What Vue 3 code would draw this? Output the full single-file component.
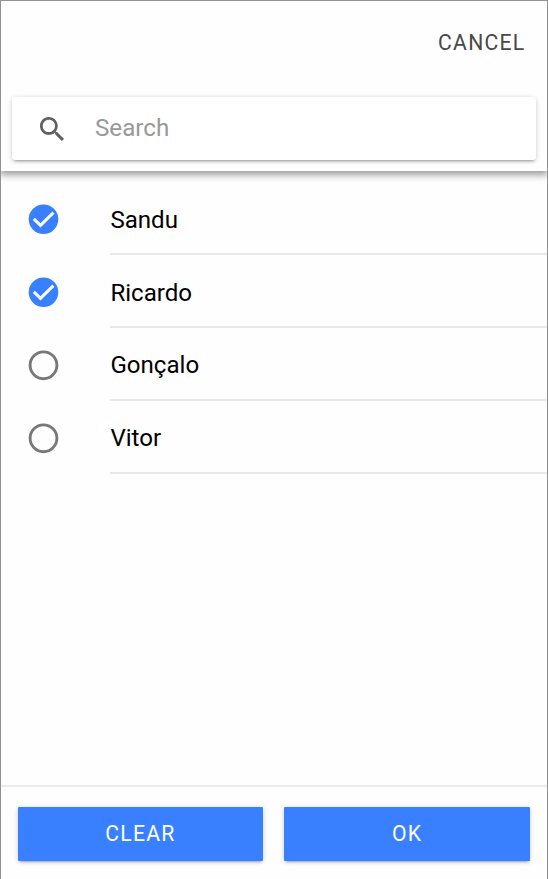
<script setup>
import { ref } from 'vue'

const query = ref('')
const people = ref([
  { name: 'Sandu', checked: true },
  { name: 'Ricardo', checked: true },
  { name: 'Gonçalo', checked: false },
  { name: 'Vitor', checked: false },
])

function clear() {
  people.value.forEach((person) => {
    person.checked = false
  })
}
</script>

<template>
  <div class="modal">
    <header class="header">
      <div class="toolbar">
        <button class="cancel">CANCEL</button>
      </div>
      <label class="search">
        <svg class="search-icon" viewBox="0 0 512 512" aria-hidden="true">
          <path d="M337.5 305.4H320l-6.6-5.5c20.8-25.2 34-57 34-93.3C347.400 127.600 283.900 64 205.100 64 127.500 64 64 127.600 64 206.600s63.500 142.600 142.200 142.600c35 0 67.800-13.100 93-34l6.600 5.500v17.600L415.200 448l32.800-32.900zM206.200 305.400c-54.700 0-98.400-43.900-98.400-98.800s43.700-98.700 98.400-98.700 98.500 43.900 98.500 98.700-43.800 98.800-98.500 98.800z" />
        </svg>
        <input v-model="query" class="search-input" type="text" placeholder="Search" />
      </label>
    </header>

    <main class="list">
      <div
        v-for="person in people"
        :key="person.name"
        class="item"
        @click="person.checked = !person.checked"
      >
        <svg class="check" viewBox="-0.5 -0.3 31 31" aria-hidden="true">
          <template v-if="person.checked">
            <circle cx="15" cy="15" r="14.800" fill="#3880ff" />
            <path d="M5.300 14.600 12 21.100 24.900 8.300" fill="none" stroke="#fff" stroke-width="3" />
          </template>
          <circle v-else cx="15" cy="15" r="13.400" fill="none" stroke="#787878" stroke-width="2.900" />
        </svg>
        <span class="name">{{ person.name }}</span>
      </div>
    </main>

    <footer class="footer">
      <button class="action" @click="clear">CLEAR</button>
      <button class="action">OK</button>
    </footer>
  </div>
</template>

<style>
body {
  background: #fff;
}
</style>

<style scoped>
.modal {
  box-sizing: border-box;
  height: 879px;
  display: flex;
  flex-direction: column;
  border: 1px solid #919191;
  border-bottom: 0;
  background: #fefefe;
  color: #000;
  font-family: Roboto, sans-serif;
}

button {
  border: 0;
  padding: 0;
  font-family: inherit;
  font-size: 21.2px;
  line-height: 26px;
  letter-spacing: 1.25px;
}

.header {
  box-sizing: border-box;
  height: 170px;
  flex: none;
  padding: 0 11px;
  background: #fefefe;
  box-shadow: 0 3px 7px 1px rgba(0, 0, 0, 0.38);
  clip-path: inset(0 0 -16px 0);
}

.toolbar {
  height: 96px;
  box-sizing: border-box;
  display: flex;
  justify-content: flex-end;
  align-items: flex-start;
  padding: 29px 10.500px 0 0;
}

.cancel {
  background: transparent;
  color: #484848;
}

.search {
  height: 63px;
  display: flex;
  align-items: center;
  border-radius: 3px;
  background: #fff;
  box-shadow:
    0 3px 3px -2px rgba(0, 0, 0, 0.3),
    0 1px 5px rgba(0, 0, 0, 0.2);
}

.search-icon {
  width: 32px;
  height: 32px;
  flex: none;
  margin-left: 24px;
  fill: #5f5f5f;
}

.search-input {
  min-width: 0;
  flex: 1;
  margin-left: 27px;
  padding: 0 0 2px;
  border: 0;
  outline: 0;
  background: transparent;
  font-family: inherit;
  font-size: 24.2px;
  line-height: 30px;
}

.search-input::placeholder {
  color: #999;
  opacity: 1;
}

.list {
  flex: 1;
  padding-top: 11.600px;
}

.item {
  height: 72.800px;
  display: flex;
  align-items: stretch;
  padding-left: 27px;
}

.check {
  width: 31px;
  height: 31px;
  flex: none;
  margin-top: 21.800px;
}

.name {
  box-sizing: border-box;
  flex: 1;
  margin-left: 51.400px;
  padding-top: 22.200px;
  border-bottom: 2px solid #e8e8e8;
  font-size: 24.100px;
  line-height: 30px;
}

.footer {
  box-sizing: border-box;
  height: 94px;
  flex: none;
  display: flex;
  gap: 21px;
  padding: 20px 17px 18px 16.500px;
  border-top: 2px solid #ebebeb;
}

.action {
  flex: 1;
  border-radius: 1px;
  background: #3880ff;
  color: #fff;
  box-shadow:
    0 3px 2px -2px rgba(0, 0, 0, 0.25),
    0 1px 5px rgba(0, 0, 0, 0.2);
}
</style>
